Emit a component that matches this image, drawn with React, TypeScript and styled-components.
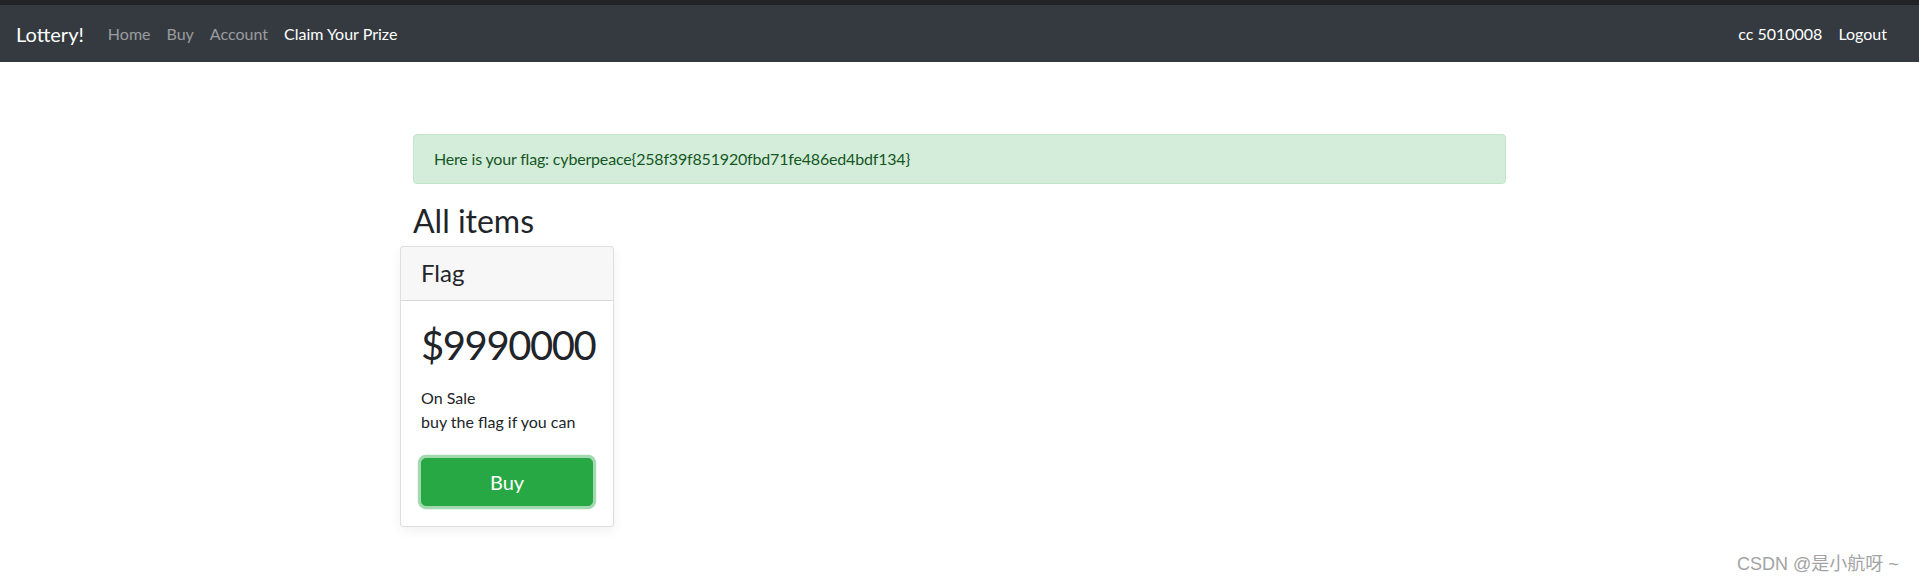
import styled, { createGlobalStyle } from "styled-components";

const GlobalStyle = createGlobalStyle`
  * { box-sizing: border-box; }
  html, body { margin: 0; padding: 0; background: #fff; }
  body {
    font-family: Lato, "Segoe UI", "Noto Sans", sans-serif;
    font-size: 16px;
    line-height: 1.5;
    color: #212529;
  }
`;

const Page = styled.div`
  position: relative;
  width: 1919px;
  height: 582px;
  overflow: hidden;
`;

const TopStrip = styled.div`
  height: 5px;
  background: #222327;
`;

const Navbar = styled.nav`
  display: flex;
  align-items: center;
  height: 57px;
  padding: 0 24px 0 16px;
  background: #343a40;
`;

const Brand = styled.a`
  font-size: 20px;
  line-height: 30px;
  color: #fff;
  margin-right: 16px;
  text-decoration: none;
`;

const NavList = styled.div`
  display: flex;
  align-items: center;
`;

const Spacer = styled.div`
  flex: 1;
`;

const NavLink = styled.a<{ $active?: boolean }>`
  padding: 8px;
  color: ${(p) => (p.$active ? "#fff" : "rgba(255, 255, 255, 0.5)")};
  text-decoration: none;
  font-size: 16px;
  line-height: 24px;
`;

const Container = styled.main`
  width: 1093px;
  margin: 72px auto 0;
`;

const Alert = styled.div`
  padding: 12px 20px;
  margin-bottom: 16px;
  border: 1px solid #c3e6cb;
  border-radius: 4px;
  background: #d4edda;
  color: #155724;
  letter-spacing: -0.18px;
`;

const Heading = styled.h2`
  margin: 0 0 6px;
  padding-top: 2px;
  font-size: 32px;
  font-weight: 400;
  line-height: 1.2;
`;

const Deck = styled.div`
  display: flex;
  margin-left: -13px;
`;

const Card = styled.div`
  width: 214px;
  border: 1px solid rgba(0, 0, 0, 0.125);
  border-radius: 4px;
  background: #fff;
  box-shadow: 0 4px 12px rgba(0, 0, 0, 0.06);
  overflow: hidden;
`;

const CardHeader = styled.div`
  padding: 12px 20px;
  background: rgba(0, 0, 0, 0.03);
  border-bottom: 1px solid rgba(0, 0, 0, 0.125);
`;

const CardTitle = styled.h4`
  margin: 0;
  font-size: 24px;
  font-weight: 400;
  line-height: 1.2;
`;

const CardBody = styled.div`
  padding: 20px;
`;

const Price = styled.h1`
  margin: 0 0 12px;
  font-size: 40px;
  font-weight: 400;
  line-height: 1.2;
  letter-spacing: -1.4px;
`;

const Features = styled.ul`
  list-style: none;
  padding: 0;
  margin: 17px 0 24px;
`;

const BuyButton = styled.button`
  display: block;
  width: 100%;
  padding: 8px 16px;
  font-family: inherit;
  font-size: 20px;
  line-height: 1.5;
  color: #fff;
  background: #28a745;
  border: 1px solid #28a745;
  border-radius: 4.8px;
  box-shadow: 0 0 0 3.2px rgba(72, 180, 97, 0.5);
  cursor: pointer;
`;

const Watermark = styled.div`
  position: absolute;
  left: 1737px;
  top: 553px;
  font-family: "Liberation Sans", "Noto Sans CJK SC", sans-serif;
  font-size: 18px;
  line-height: 22px;
  color: #a3a3a3;
  text-shadow: 0 0 1px #fff;
  white-space: nowrap;
`;

export default function App() {
  return (
    <>
      <GlobalStyle />
      <Page>
        <TopStrip />
        <Navbar>
          <Brand href="#">Lottery!</Brand>
          <NavList>
            <NavLink href="#">Home</NavLink>
            <NavLink href="#">Buy</NavLink>
            <NavLink href="#">Account</NavLink>
            <NavLink href="#" $active>
              Claim Your Prize
            </NavLink>
          </NavList>
          <Spacer />
          <NavList>
            <NavLink $active>cc 5010008</NavLink>
            <NavLink href="#" $active>
              Logout
            </NavLink>
          </NavList>
        </Navbar>
        <Container>
          <Alert>Here is your flag: cyberpeace{"{"}258f39f851920fbd71fe486ed4bdf134{"}"}</Alert>
          <Heading>All items</Heading>
          <Deck>
            <Card>
              <CardHeader>
                <CardTitle>Flag</CardTitle>
              </CardHeader>
              <CardBody>
                <Price>$9990000</Price>
                <Features>
                  <li>On Sale</li>
                  <li>buy the flag if you can</li>
                </Features>
                <BuyButton>Buy</BuyButton>
              </CardBody>
            </Card>
          </Deck>
        </Container>
        <Watermark>CSDN @是小航呀 ~</Watermark>
      </Page>
    </>
  );
}
